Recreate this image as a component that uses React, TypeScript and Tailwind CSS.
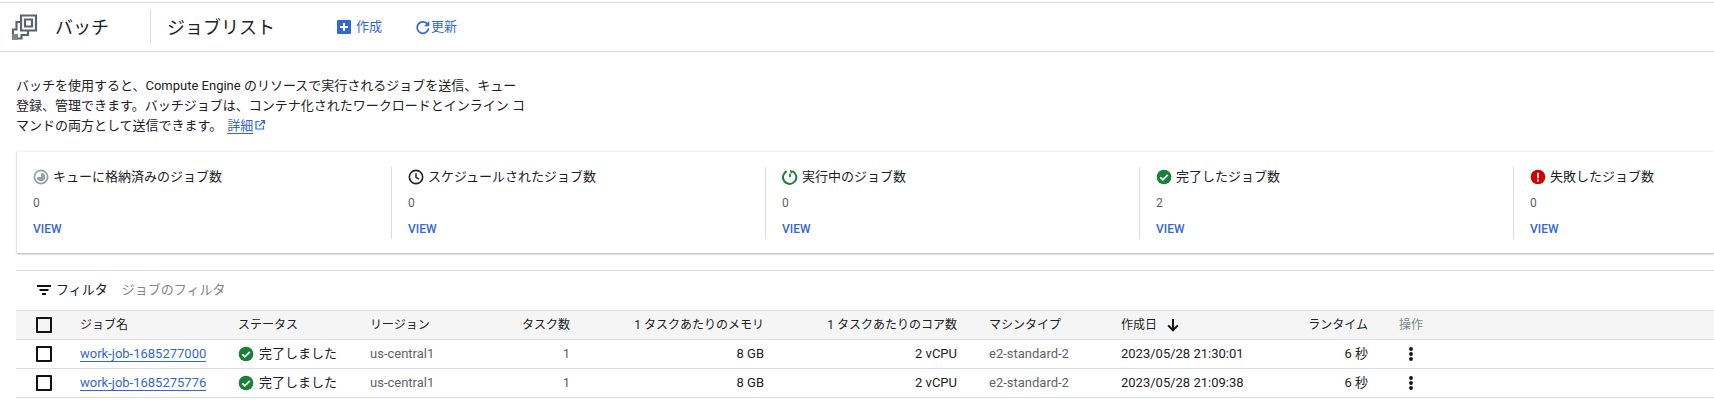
const cols = 'grid grid-cols-[64px_158px_132px_100px_100px_194px_193px_164px_169px_78px_1fr] items-center';
const font = { fontFamily: 'Roboto, "Noto Sans CJK JP", sans-serif' };

const jobs = [
    { name: 'work-job-1685277000', created: '2023/05/28 21:30:01' },
    { name: 'work-job-1685275776', created: '2023/05/28 21:09:38' },
];

function DoneIcon({ size = 16 }: { size?: number }) {
    return (
        <svg width={size} height={size} viewBox="0 0 24 24" className="shrink-0">
            <circle cx="12" cy="12" r="11" fill="#188038" />
            <path d="M6.5 12.5l3.8 3.8 7.4-7.6" fill="none" stroke="#fff" strokeWidth="2.6" />
        </svg>
    );
}

function QueuedIcon() {
    return (
        <svg width="16" height="16" viewBox="0 0 24 24" className="shrink-0">
            <circle cx="12" cy="12" r="10" fill="none" stroke="#9aa0a6" strokeWidth="2.6" />
            <path d="M12 5.5a6.5 6.5 0 1 1-6.5 6.5H12z" fill="#9aa0a6" />
        </svg>
    );
}

function ClockIcon() {
    return (
        <svg width="16" height="16" viewBox="0 0 24 24" className="shrink-0">
            <circle cx="12" cy="12" r="10" fill="none" stroke="#202124" strokeWidth="2.4" />
            <path d="M12 6.5V12.5l4.5 2.6" fill="none" stroke="#202124" strokeWidth="2.2" />
        </svg>
    );
}

function RunningIcon() {
    return (
        <svg width="16" height="16" viewBox="0 0 24 24" className="shrink-0">
            <path d="M15.5 3.2A10 10 0 1 1 7 3.4" fill="none" stroke="#188038" strokeWidth="3" />
            <path d="M12 1l4.8 2.600L13 7.500z" fill="#188038" />
            <path d="M12 7v5.500" stroke="#188038" strokeWidth="2.600" />
        </svg>
    );
}

function FailedIcon() {
    return (
        <svg width="16" height="16" viewBox="0 0 24 24" className="shrink-0">
            <circle cx="12" cy="12" r="11" fill="#d50000" />
            <path d="M10.6 5.5h2.8v8.5h-2.8zM10.6 15.8h2.8v2.8h-2.8z" fill="#fff" />
        </svg>
    );
}

function Checkbox() {
    return <div className="ml-[20px] h-[16px] w-[16px] border-2 border-[#111] rounded-[1px]"></div>;
}

function Stat({ icon, label, value, first }: { icon: React.ReactNode; label: string; value: string; first?: boolean }) {
    return (
        <div className={`flex h-[72px] w-[374px] shrink-0 flex-col pl-[16px] ${first ? '' : 'border-l border-[#dadce0]'}`}>
            <div className="flex h-[20px] items-center gap-[4px] text-[13px] text-[#202124]">
                {icon}
                <span>{label}</span>
            </div>
            <div className="mt-[6px] h-[20px] text-[12px] leading-[20px] text-[#5f6368]">{value}</div>
            <div className="mt-[6px] text-[12px] font-medium leading-[20px] text-[#3367d6]">VIEW</div>
        </div>
    );
}

export default function App() {
    return (
        <div style={font} className="h-[415px] w-[1714px] overflow-hidden bg-white text-[#202124]">
            <div className="mt-[2px] flex h-[50px] items-center border-t border-b border-[#dadce0]">
                <svg width="30" height="30" viewBox="0 0 30 30" className="ml-[9px] shrink-0">
                    <path d="M12 3.500h15v15H12z M16 7.500h7v7h-7z" fill="none" stroke="#5f6368" strokeWidth="2.200" />
                    <path d="M11 10H7.500v7.500H4v9h8.500V23H19v-4" fill="none" stroke="#5f6368" strokeWidth="2.200" />
                    <path d="M3 22h6v6H3z" fill="#80868b" />
                </svg>
                <span className="ml-[16px] text-[18px]">バッチ</span>
                <div className="ml-[41px] h-[34px] w-px bg-[#dadce0]"></div>
                <span className="ml-[16px] text-[18px]">ジョブリスト</span>
                <svg width="14" height="14" viewBox="0 0 14 14" className="ml-[62px] shrink-0">
                    <rect width="14" height="14" rx="1" fill="#3367d6" />
                    <path d="M7 3v8M3 7h8" stroke="#fff" strokeWidth="2" />
                </svg>
                <span className="ml-[5px] text-[13px] text-[#3367d6]">作成</span>
                <svg width="16" height="16" viewBox="0 0 24 24" className="ml-[33px] shrink-0">
                    <path d="M19 8a8.6 8.6 0 1 0 1.4 6" fill="none" stroke="#3367d6" strokeWidth="2.6" />
                    <path d="M21.5 3v8h-8z" fill="#3367d6" />
                </svg>
                <span className="text-[13px] text-[#3367d6]">更新</span>
            </div>

            <p className="ml-[16px] mt-[24px] w-[510px] text-[13px] leading-[20px]">
                バッチを使用すると、Compute Engine のリソースで実行されるジョブを送信、キュー登録、管理できます。バッチジョブは、コンテナ化されたワークロードとインライン コマンドの両方として送信できます。
                <a className="ml-[5px] border-b border-[#3367d6] text-[#3367d6]">詳細</a>
                <svg width="12" height="12" viewBox="0 0 24 24" className="ml-[1px] inline align-[-1px]">
                    <path d="M19 13v7H4V5h7M14 3h7v7M21 3L10 14" fill="none" stroke="#3367d6" strokeWidth="2.4" />
                </svg>
            </p>

            <div className="ml-[17px] mt-[15px] flex h-[102px] items-center overflow-hidden border-t border-[#f1f3f4] shadow-[0_1px_2px_rgba(60,64,67,0.45)]">
                <Stat first icon={<QueuedIcon />} label="キューに格納済みのジョブ数" value="0" />
                <Stat icon={<ClockIcon />} label="スケジュールされたジョブ数" value="0" />
                <Stat icon={<RunningIcon />} label="実行中のジョブ数" value="0" />
                <Stat icon={<DoneIcon />} label="完了したジョブ数" value="2" />
                <Stat icon={<FailedIcon />} label="失敗したジョブ数" value="0" />
            </div>

            <div className="ml-[16px] mt-[17px] border-t border-[#dadce0]">
                <div className="flex h-[39px] items-center pb-[2px] pl-[20px] text-[13px]">
                    <svg width="16" height="16" viewBox="0 0 16 16" className="shrink-0">
                        <path d="M1 3h14v2H1zM3.500 7h9v2h-9zM6 11h4v2H6z" fill="#111" />
                    </svg>
                    <span className="ml-[4px]">フィルタ</span>
                    <span className="ml-[14px] text-[#80868b]">ジョブのフィルタ</span>
                </div>
                <div className={`${cols} h-[30px] border-t border-b border-[#dadce0] bg-[#f5f5f5] text-[12px]`}>
                    <Checkbox />
                    <span>ジョブ名</span>
                    <span>ステータス</span>
                    <span>リージョン</span>
                    <span className="text-right">タスク数</span>
                    <span className="text-right">1 タスクあたりのメモリ</span>
                    <span className="text-right">1 タスクあたりのコア数</span>
                    <span className="pl-[32px]">マシンタイプ</span>
                    <div className="flex items-center gap-[7px]">
                        <span>作成日</span>
                        <svg width="18" height="18" viewBox="0 0 24 24" className="shrink-0">
                            <path d="M12 4v15M5.500 12.500L12 19l6.500-6.500" fill="none" stroke="#111" strokeWidth="2.600" />
                        </svg>
                    </div>
                    <span className="text-right">ランタイム</span>
                    <span className="pl-[31px] text-[#80868b]">操作</span>
                </div>
                {jobs.map((job) => (
                    <div key={job.name} className={`${cols} h-[29px] border-b border-[#dadce0] text-[13px]`}>
                        <Checkbox />
                        <a className="w-fit border-b border-[#3367d6] leading-[15px] text-[#3367d6]">{job.name}</a>
                        <div className="flex items-center gap-[5px]">
                            <DoneIcon />
                            <span>完了しました</span>
                        </div>
                        <span className="text-[#5f6368]">us-central1</span>
                        <span className="text-right text-[#5f6368]">1</span>
                        <span className="text-right">8 GB</span>
                        <span className="text-right">2 vCPU</span>
                        <span className="pl-[32px] text-[#5f6368]">e2-standard-2</span>
                        <span>{job.created}</span>
                        <span className="text-right">6 秒</span>
                        <div className="pl-[35px]">
                            <svg width="16" height="18" viewBox="0 0 16 18" className="block">
                                <circle cx="8" cy="4" r="1.900" fill="#111" />
                                <circle cx="8" cy="9" r="1.900" fill="#111" />
                                <circle cx="8" cy="14" r="1.900" fill="#111" />
                            </svg>
                        </div>
                    </div>
                ))}
            </div>
        </div>
    );
}
